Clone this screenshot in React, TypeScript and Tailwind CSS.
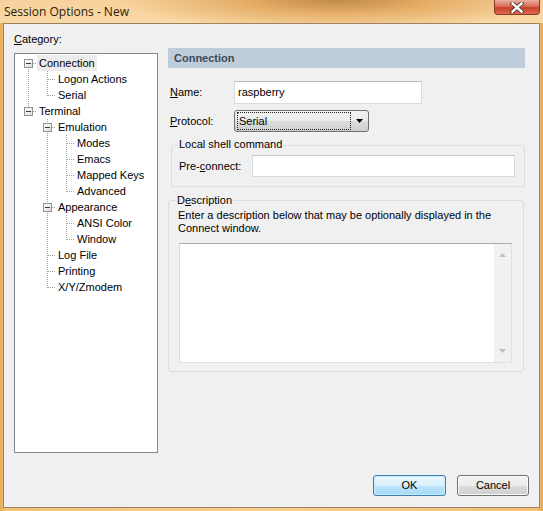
import React from "react";

type Cell = "none" | "pass" | "tee" | "ell" | "boxFirst" | "boxLast" | "boxMid";

interface TreeRow {
  label: string;
  cells: Cell[];
  selected?: boolean;
}

const rows: TreeRow[] = [
  { label: "Connection", cells: ["boxFirst"], selected: true },
  { label: "Logon Actions", cells: ["pass", "tee"] },
  { label: "Serial", cells: ["pass", "ell"] },
  { label: "Terminal", cells: ["boxLast"] },
  { label: "Emulation", cells: ["none", "boxMid"] },
  { label: "Modes", cells: ["none", "pass", "tee"] },
  { label: "Emacs", cells: ["none", "pass", "tee"] },
  { label: "Mapped Keys", cells: ["none", "pass", "tee"] },
  { label: "Advanced", cells: ["none", "pass", "ell"] },
  { label: "Appearance", cells: ["none", "boxMid"] },
  { label: "ANSI Color", cells: ["none", "pass", "tee"] },
  { label: "Window", cells: ["none", "pass", "ell"] },
  { label: "Log File", cells: ["none", "tee"] },
  { label: "Printing", cells: ["none", "tee"] },
  { label: "X/Y/Zmodem", cells: ["none", "ell"] },
];

const dot = { stroke: "#a0a0a0", strokeWidth: 1, strokeDasharray: "1 1" };

function TreeCell({ kind }: { kind: Cell }) {
  const isBox = kind === "boxFirst" || kind === "boxLast" || kind === "boxMid";
  return (
    <svg width="19" height="16" viewBox="0 0 19 16" className="shrink-0">
      {kind === "pass" && <line x1="10.5" y1="0" x2="10.5" y2="16" {...dot} />}
      {kind === "tee" && (
        <>
          <line x1="10.5" y1="0" x2="10.5" y2="16" {...dot} />
          <line x1="11" y1="8.5" x2="19" y2="8.5" {...dot} />
        </>
      )}
      {kind === "ell" && (
        <>
          <line x1="10.5" y1="0" x2="10.5" y2="9" {...dot} />
          <line x1="11" y1="8.5" x2="19" y2="8.5" {...dot} />
        </>
      )}
      {isBox && (
        <>
          {(kind === "boxLast" || kind === "boxMid") && <line x1="10.5" y1="0" x2="10.5" y2="4" {...dot} />}
          {(kind === "boxFirst" || kind === "boxMid") && <line x1="10.5" y1="14" x2="10.5" y2="16" {...dot} />}
          <line x1="15" y1="8.5" x2="19" y2="8.5" {...dot} />
          <defs>
            <linearGradient id="bx" x1="0" y1="0" x2="1" y2="1">
              <stop offset="0" stopColor="#ffffff" />
              <stop offset="1" stopColor="#dcdcdc" />
            </linearGradient>
          </defs>
          <rect x="6.5" y="4.5" width="8" height="8" fill="url(#bx)" stroke="#919191" />
          <line x1="8" y1="8.5" x2="13" y2="8.5" stroke="#3a3a3a" />
        </>
      )}
    </svg>
  );
}

function Key({ children }: { children: React.ReactNode }) {
  return <span className="underline underline-offset-[1px]">{children}</span>;
}

export default function App() {
  return (
    <div
      className="w-[543px] h-[511px] flex flex-col overflow-hidden text-[11px] text-black bg-[linear-gradient(90deg,#e7ad5c_0%,#f2c27c_1%,#f7cf92_50%,#f1c07a_99%,#e4a857_100%)]"
      style={{ fontFamily: '"Liberation Sans", Arial, sans-serif' }}
    >
      {/* Title bar */}
      <div className="relative h-[23px] shrink-0 flex items-center pl-[4px] bg-[radial-gradient(ellipse_220px_30px_at_62%_0%,#c08a48_0%,#e6b06a_45%,transparent_100%),linear-gradient(180deg,#f7d29c_0%,#f9d9a6_100%)]">
        <span className="text-[12px] text-[#2a1c0a]" style={{ fontFamily: '"Open Sans", "Noto Sans", sans-serif' }}>
          Session Options - New
        </span>
        <div className="absolute top-0 right-[3px] w-[46px] h-[15px] rounded-b-[4px] border border-t-0 border-[#8a3a28] bg-[linear-gradient(180deg,#eab0a0_0%,#d96c55_45%,#c9412a_55%,#dc6a52_100%)] flex items-center justify-center">
          <svg width="14" height="11" viewBox="0 0 14 11">
            <path d="M2.5 1.5 L11.5 9.5 M11.5 1.5 L2.5 9.5" stroke="#4a3434" strokeWidth="4.2" strokeLinecap="square" />
            <path d="M2.5 1.5 L11.5 9.5 M11.5 1.5 L2.5 9.5" stroke="#ffffff" strokeWidth="2.4" strokeLinecap="square" />
          </svg>
        </div>
      </div>

      {/* Client area */}
      <div className="ml-[3px] w-[537px] h-[485px] shrink-0 border border-[#9c8461] bg-[#f0f0f0] flex flex-col">
        <div className="flex">
          {/* Category tree */}
          <div className="ml-[10px] flex flex-col">
            <div className="mt-[8px] h-[14px] leading-[14px]">
              <Key>C</Key>ategory:
            </div>
            <div className="mt-[7px] w-[144px] h-[400px] border border-[#828790] bg-white pt-[1px] pl-[3px]">
              {rows.map((r) => (
                <div key={r.label} className="flex items-center h-[16px]">
                  {r.cells.map((c, i) => (
                    <TreeCell key={i} kind={c} />
                  ))}
                  <span className={`px-[2px] h-[16px] leading-[16px] whitespace-nowrap ${r.selected ? "bg-[#ececec]" : ""}`}>
                    {r.label}
                  </span>
                </div>
              ))}
            </div>
          </div>

          {/* Right panel */}
          <div className="ml-[10px] w-[357px] flex flex-col">
            <div className="mt-[24px] h-[20px] bg-[#bfcddb] flex items-center pl-[6px] font-bold text-[#3e4a58]">
              Connection
            </div>

            <div className="mt-[13px] flex items-center h-[23px]">
              <div className="w-[66px] pl-[2px]">
                <Key>N</Key>ame:
              </div>
              <div className="w-[188px] h-[23px] bg-white border border-[#d6dbe0] border-t-[#b7bcc3] flex items-center pl-[3px]">
                raspberry
              </div>
            </div>

            <div className="mt-[6px] flex items-center h-[22px]">
              <div className="w-[66px] pl-[2px]">
                <Key>P</Key>rotocol:
              </div>
              <div className="w-[135px] h-[22px] rounded-[3px] border border-[#707070] bg-[linear-gradient(180deg,#f2f2f2_0%,#ebebeb_50%,#dddddd_50%,#cfcfcf_100%)] flex items-center pl-[2px] pr-[5px]">
                <div className="w-[114px] h-[18px] border border-dotted border-[#202020] flex items-center pl-[1px]">
                  Serial
                </div>
                <div className="flex-1 flex justify-end">
                  <svg width="7" height="4" viewBox="0 0 7 4">
                    <path d="M0 0 H7 L3.5 4 Z" fill="#000" />
                  </svg>
                </div>
              </div>
            </div>

            {/* Local shell command */}
            <div className="relative mt-[13px] ml-[3px] w-[354px] h-[42px] rounded-[3px] border border-[#d5dfe5] flex items-center pl-[7px]">
              <span className="absolute -top-[9px] left-[6px] px-[1px] bg-[#f0f0f0] leading-[14px]">Local shell command</span>
              <div className="w-[73px]">
                Pre-<Key>c</Key>onnect:
              </div>
              <div className="w-[263px] h-[22px] bg-white border border-[#d6dbe0] border-t-[#c3c8ce]" />
            </div>

            {/* Description */}
            <div className="relative mt-[13px] w-[356px] h-[172px] rounded-[3px] border border-[#d5dfe5] pl-[9px] pt-[8px]">
              <span className="absolute -top-[8px] left-[7px] px-[1px] bg-[#f0f0f0] leading-[14px]">
                D<Key>e</Key>scription
              </span>
              <div className="leading-[13px]">
                Enter a description below that may be optionally displayed in the
                <br />
                Connect window.
              </div>
              <div className="mt-[8px] ml-[1px] w-[333px] h-[120px] bg-white border border-[#dde1e6] border-t-[#a9adb3] flex justify-end">
                <div className="w-[17px] h-full bg-[#f1f1f1] flex flex-col items-center justify-between py-[9px]">
                  <svg width="7" height="4" viewBox="0 0 7 4">
                    <path d="M0 4 H7 L3.5 0 Z" fill="#bfbfbf" />
                  </svg>
                  <svg width="7" height="4" viewBox="0 0 7 4">
                    <path d="M0 0 H7 L3.5 4 Z" fill="#bfbfbf" />
                  </svg>
                </div>
              </div>
            </div>
          </div>
        </div>

        {/* Buttons */}
        <div className="mt-auto mb-[11px] mr-[10px] flex justify-end gap-[11px]">
          <button className="w-[73px] h-[21px] rounded-[3px] border border-[#3c7fb1] shadow-[inset_0_0_0_1px_#c6ecfc] bg-[linear-gradient(180deg,#eaf6fd_0%,#d9f0fc_50%,#bee6fd_50%,#a7d9f5_100%)] text-[11px]">
            OK
          </button>
          <button className="w-[72px] h-[21px] rounded-[3px] border border-[#707070] shadow-[inset_0_0_0_1px_#fbfbfb] bg-[linear-gradient(180deg,#f2f2f2_0%,#ebebeb_50%,#dddddd_50%,#cfcfcf_100%)] text-[11px]">
            Cancel
          </button>
        </div>
      </div>
    </div>
  );
}
